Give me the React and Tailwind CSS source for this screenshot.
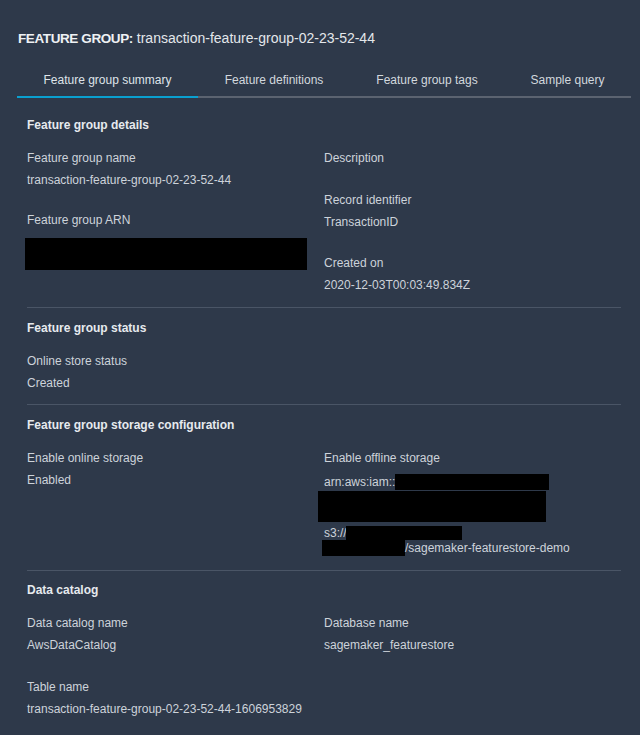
const font = { fontFamily: '"Liberation Sans", Arial, sans-serif' };

const tabs = [
  { name: 'Feature group summary', w: 'w-[181px]', active: true },
  { name: 'Feature definitions', w: 'w-[152px]' },
  { name: 'Feature group tags', w: 'w-[154px]' },
  { name: 'Sample query', w: 'flex-1' },
];

function Field({ label, children }) {
  return (
    <div>
      <div className="leading-[22px] text-[#cdd3da]">{label}</div>
      {children}
    </div>
  );
}

function Value({ children }) {
  return <div className="leading-[22px] text-[#cdd3da]">{children}</div>;
}

function Section({ title, first, children, pt = 'pt-[9px]', pb = 'pb-[11px]' }) {
  return (
    <div className={`${first ? 'pt-[16px]' : `border-t border-[#4a5566] ${pt}`} ${pb}`}>
      <div className="text-[12px] font-bold leading-[22px] text-[#e6eaee]">{title}</div>
      <div className="mt-[11px]">{children}</div>
    </div>
  );
}

function Redacted({ className }) {
  return <span className={`bg-black ${className}`} />;
}

export default function App() {
  return (
    <div className="min-h-[735px] w-[640px] bg-[#2e394a] pl-[17px] pr-[9px] pt-[28px] text-[12px]" style={font}>
      <h1 className="ml-[1px] leading-[20px] text-[14px] text-[#e3e7eb]">
        <span className="font-bold text-[13.5px] tracking-[-0.4px] text-[#eef1f4]">FEATURE GROUP:</span>{' '}
        transaction-feature-group-02-23-52-44
      </h1>

      <div className="mt-[21px] flex border-b-2 border-[#5b6370]">
        {tabs.map((t) => (
          <div
            key={t.name}
            className={`${t.w} -mb-[2px] pb-[6px] text-center leading-[20px] text-[12px] ${
              t.active ? 'border-b-2 border-[#0aa0d0] text-[#dfe4e9]' : 'border-b-2 border-transparent text-[#d2d8de]'
            }`}
          >
            {t.name}
          </div>
        ))}
      </div>

      <div className="px-[10px]">
        <Section title="Feature group details" first pb="pb-[11px]">
          <div className="grid grid-cols-2">
            <div className="flex flex-col gap-[18px]">
              <Field label="Feature group name">
                <Value>transaction-feature-group-02-23-52-44</Value>
              </Field>
              <Field label="Feature group ARN">
                <div className="ml-[-2px] mt-[7px] h-[32px] w-[282px] bg-black" />
              </Field>
            </div>
            <div className="flex flex-col gap-[20px]">
              <Field label="Description" />
              <div className="flex flex-col gap-[19px]">
                <Field label="Record identifier">
                  <Value>TransactionID</Value>
                </Field>
                <Field label="Created on">
                  <Value>2020-12-03T00:03:49.834Z</Value>
                </Field>
              </div>
            </div>
          </div>
        </Section>

        <Section title="Feature group status" pb="pb-[10px]">
          <Field label="Online store status">
            <Value>Created</Value>
          </Field>
        </Section>

        <Section title="Feature group storage configuration" pb="pb-[14px]">
          <div className="grid grid-cols-2">
            <Field label="Enable online storage">
              <Value>Enabled</Value>
            </Field>
            <Field label="Enable offline storage">
              <div className="mt-[3px] flex items-center leading-[20px] text-[#cdd3da]">
                arn:aws:iam::
                <Redacted className="inline-block h-[16px] w-[154px]" />
              </div>
              <div className="-mt-[1px] ml-[-6px] h-[31px] w-[228px] bg-black" />
              <div className="mt-[3px] flex items-center leading-[16px] text-[#cdd3da]">
                s3://
                <Redacted className="ml-[-1px] inline-block h-[14px] w-[116px]" />
              </div>
              <div className="-mt-[1px] flex items-center leading-[16px] text-[#cdd3da]">
                <Redacted className="ml-[-2px] inline-block h-[16px] w-[83px]" />
                /sagemaker-featurestore-demo
              </div>
            </Field>
          </div>
        </Section>

        <Section title="Data catalog" pt="pt-[8px]" pb="pb-[16px]">
          <div className="grid grid-cols-2 gap-y-[20px]">
            <Field label="Data catalog name">
              <Value>AwsDataCatalog</Value>
            </Field>
            <Field label="Database name">
              <Value>sagemaker_featurestore</Value>
            </Field>
            <Field label="Table name">
              <Value>transaction-feature-group-02-23-52-44-1606953829</Value>
            </Field>
          </div>
        </Section>
      </div>
    </div>
  );
}
